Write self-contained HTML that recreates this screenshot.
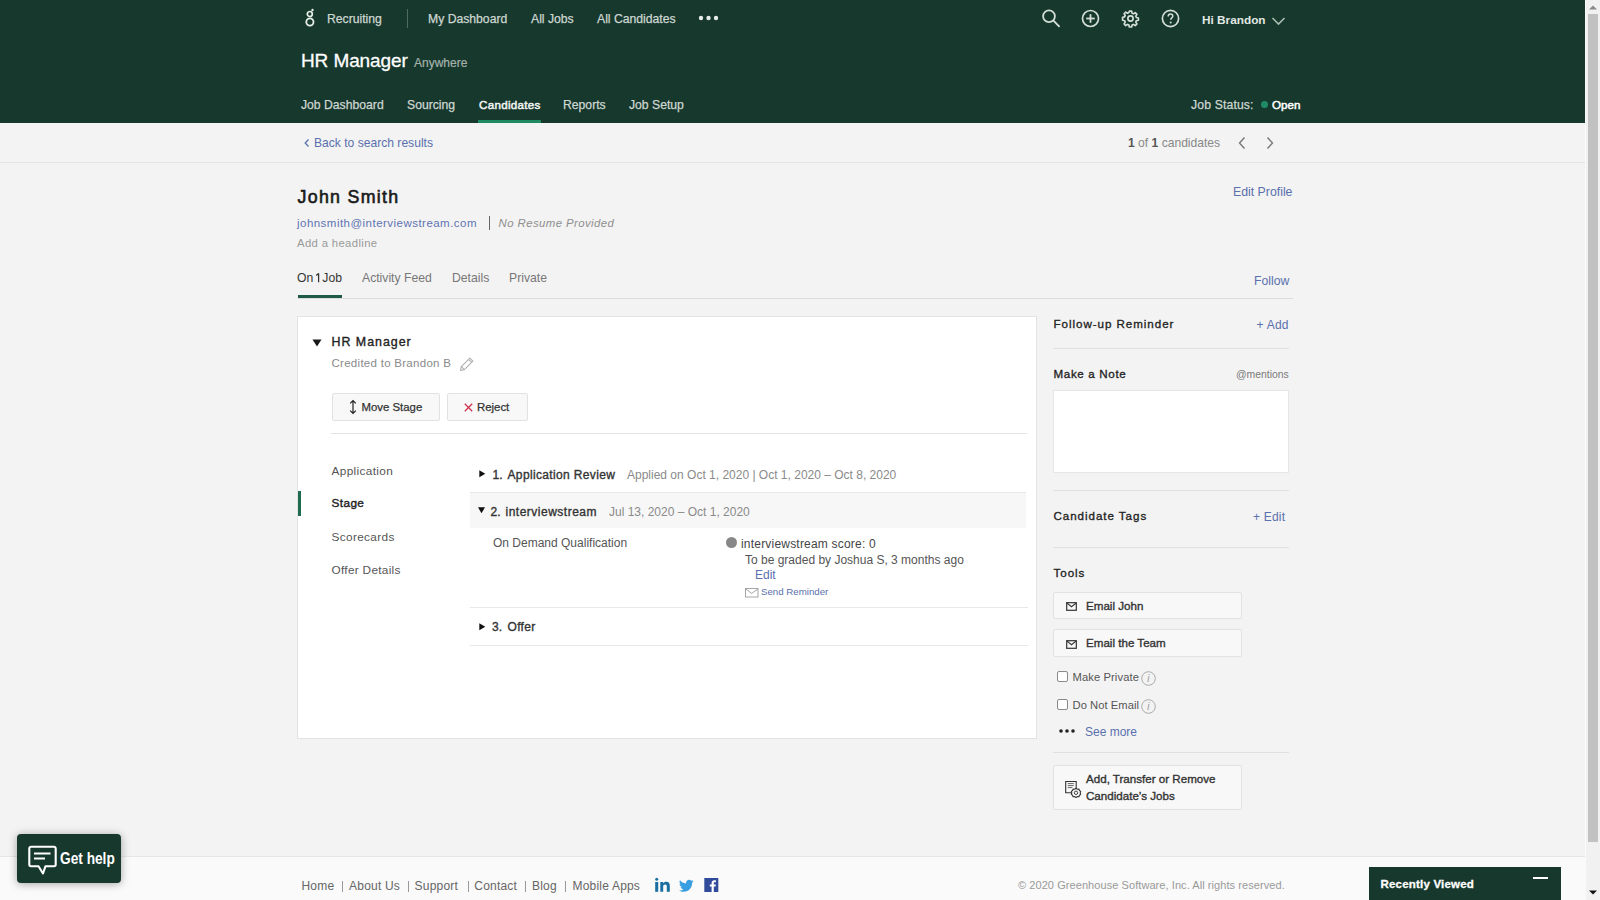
<!DOCTYPE html>
<html><head><meta charset="utf-8">
<style>
*{margin:0;padding:0;box-sizing:border-box}
html,body{width:1600px;height:900px;overflow:hidden;background:#f3f3f3;font-family:"Liberation Sans",sans-serif;font-size:12px;color:#333}
.a{position:absolute;white-space:nowrap}
#hdr{position:absolute;left:0;top:0;width:1585px;height:123px;background:#17382d}
.hn{color:#cdd7d1;font-size:12.2px;-webkit-text-stroke:0.25px #cdd7d1}
.hb{color:#f2f5f3;font-weight:bold}
.lnk{color:#5a70ad}
.g{color:#8a8a8a}
.line{position:absolute;background:#e2e2e2}
#sb{position:absolute;left:1585px;top:0;width:15px;height:900px;background:#f1f1f1}
</style></head><body>
<div id="hdr">
  <!-- logo -->
  <svg class="a" style="left:303px;top:8px" width="14" height="20" viewBox="0 0 14 20">
    <circle cx="6.8" cy="6" r="2.5" fill="none" stroke="#e6efe9" stroke-width="1.7"/>
    <circle cx="6.9" cy="14" r="3.6" fill="none" stroke="#e6efe9" stroke-width="1.8"/>
    <circle cx="9.5" cy="2" r="1.2" fill="#e6efe9"/>
  </svg>
  <div class="a hn" style="left:327px;top:12px">Recruiting</div>
  <div class="a" style="left:407px;top:9px;width:1px;height:19px;background:#4f6a5f"></div>
  <div class="a hn" style="left:428px;top:12px">My Dashboard</div>
  <div class="a hn" style="left:531px;top:12px">All Jobs</div>
  <div class="a hn" style="left:597px;top:12px">All Candidates</div>
  <svg class="a" style="left:698px;top:14px" width="22" height="8"><circle cx="3" cy="4" r="2.2" fill="#e6ece8"/><circle cx="10.5" cy="4" r="2.2" fill="#e6ece8"/><circle cx="18" cy="4" r="2.2" fill="#e6ece8"/></svg>

  <!-- right icons -->
  <svg class="a" style="left:1040px;top:8px" width="22" height="22" viewBox="0 0 22 22">
    <circle cx="9" cy="8.2" r="5.9" fill="none" stroke="#d3ded7" stroke-width="1.8"/>
    <line x1="13.2" y1="12.4" x2="19.6" y2="18.8" stroke="#d3ded7" stroke-width="1.9"/>
  </svg>
  <svg class="a" style="left:1080px;top:8px" width="22" height="22" viewBox="0 0 22 22">
    <circle cx="10.5" cy="10.5" r="8" fill="none" stroke="#d3ded7" stroke-width="1.7"/>
    <line x1="10.5" y1="6.2" x2="10.5" y2="14.8" stroke="#d3ded7" stroke-width="1.8"/>
    <line x1="6.2" y1="10.5" x2="14.8" y2="10.5" stroke="#d3ded7" stroke-width="1.8"/>
  </svg>
  <svg class="a" style="left:1120px;top:8px" width="22" height="22" viewBox="0 0 22 22">
    <g transform="translate(10.5 10.5) scale(0.88) translate(-10.5 -10.5)">
    <path d="M9.2 2.2h2.6l.5 2.3 1.6.7 2-1.3 1.9 1.9-1.3 2 .7 1.6 2.3.5v2.6l-2.3.5-.7 1.6 1.3 2-1.9 1.9-2-1.3-1.6.7-.5 2.3H9.2l-.5-2.3-1.6-.7-2 1.3-1.9-1.9 1.3-2-.7-1.6-2.3-.5V9.2l2.3-.5.7-1.6-1.3-2 1.9-1.9 2 1.3 1.6-.7z" fill="none" stroke="#d3ded7" stroke-width="1.9" stroke-linejoin="round"/>
    <circle cx="10.5" cy="10.5" r="3" fill="none" stroke="#d3ded7" stroke-width="1.9"/>
    </g>
  </svg>
  <svg class="a" style="left:1160px;top:8px" width="22" height="22" viewBox="0 0 22 22">
    <circle cx="10.5" cy="10.5" r="8.1" fill="none" stroke="#d3ded7" stroke-width="1.7"/>
    <path d="M8.2 8.4c0-1.5 1-2.3 2.3-2.3s2.3.9 2.3 2.1c0 1.6-2.1 1.7-2.1 3.5" fill="none" stroke="#d3ded7" stroke-width="1.5"/>
    <circle cx="10.7" cy="14.6" r="1" fill="#d3ded7"/>
  </svg>
  <div class="a hb" style="left:1202px;top:12.5px;font-size:11.8px;color:#e1e8e4">Hi Brandon</div>
  <svg class="a" style="left:1271px;top:16px" width="16" height="10"><path d="M1.5 2l6 6 6-6" fill="none" stroke="#a9bcb2" stroke-width="1.6"/></svg>

  <div class="a" style="left:301px;top:49.5px;font-size:19px;color:#fff;letter-spacing:-0.1px;-webkit-text-stroke:0.3px #fff">HR Manager</div>
  <div class="a" style="left:414px;top:56px;font-size:12px;color:#a3b2aa;-webkit-text-stroke:0.2px #a3b2aa">Anywhere</div>

  <div class="a hn" style="left:301px;top:97.5px">Job Dashboard</div>
  <div class="a hn" style="left:407px;top:97.5px">Sourcing</div>
  <div class="a" style="left:479px;top:97.8px;font-size:11.6px;color:#f0f4f1;-webkit-text-stroke:0.5px #f0f4f1;letter-spacing:0.3px">Candidates</div>
  <div class="a hn" style="left:563px;top:97.5px">Reports</div>
  <div class="a hn" style="left:629px;top:97.5px">Job Setup</div>
  <div class="a" style="left:478px;top:120px;width:63px;height:3px;background:#1f8a62"></div>

  <div class="a hn" style="left:1191px;top:97.5px;letter-spacing:0.15px">Job Status:</div>
  <div class="a" style="left:1261px;top:100.5px;width:7px;height:7px;border-radius:50%;background:#1f8c68"></div>
  <div class="a" style="left:1272px;top:97.8px;font-size:11.6px;color:#fff;-webkit-text-stroke:0.5px #fff">Open</div>
</div>


<!-- breadcrumb bar -->
<div class="line" style="left:0;top:162px;width:1585px;height:1px;background:#e4e4e4"></div>
<svg class="a" style="left:303px;top:138px" width="8" height="10"><path d="M5.5 1.5L2.2 5l3.3 3.5" fill="none" stroke="#5a70ad" stroke-width="1.3"/></svg>
<div class="a lnk" style="left:314px;top:136px;font-size:12.1px">Back to search results</div>
<div class="a" style="left:1128px;top:136px;font-size:12.1px;color:#888"><b style="color:#555">1</b> of <b style="color:#555">1</b> candidates</div>
<svg class="a" style="left:1237px;top:136px" width="10" height="14"><path d="M7.5 1.5L2.5 7l5 5.5" fill="none" stroke="#777" stroke-width="1.4"/></svg>
<svg class="a" style="left:1265px;top:136px" width="10" height="14"><path d="M2.5 1.5L7.5 7l-5 5.5" fill="none" stroke="#777" stroke-width="1.4"/></svg>

<!-- profile -->
<div class="a" style="left:297.5px;top:186.5px;font-size:17.8px;color:#1a1a1a;letter-spacing:1.3px;-webkit-text-stroke:0.6px #1a1a1a">John Smith</div>
<div class="a lnk" style="left:297px;top:216.5px;font-size:11.5px;letter-spacing:0.47px;color:#5f74b2">johnsmith@interviewstream.com</div>
<div class="a" style="left:489px;top:216px;width:1px;height:14px;background:#666"></div>
<div class="a" style="left:498.5px;top:216.5px;font-size:11.4px;letter-spacing:0.42px;font-style:italic;color:#8e8e8e">No Resume Provided</div>
<div class="a" style="left:297px;top:236.5px;font-size:11.3px;letter-spacing:0.36px;color:#9a9a9a">Add a headline</div>
<div class="a lnk" style="left:1233px;top:185px;font-size:12.3px">Edit Profile</div>

<!-- tabs -->
<div class="a" style="left:297px;top:271px;font-size:12.2px;color:#333">On</div><svg class="a" style="left:315px;top:273px" width="6" height="10"><path d="M3.6 0.3V9.2 M3.6 0.6L1.2 2.6" fill="none" stroke="#333" stroke-width="1.25"/></svg><div class="a" style="left:322.3px;top:271px;font-size:12.2px;color:#333">Job</div>
<div class="a" style="left:362px;top:271px;font-size:12.2px;color:#777">Activity Feed</div>
<div class="a" style="left:452px;top:271px;font-size:12.2px;color:#777">Details</div>
<div class="a" style="left:509px;top:271px;font-size:12.2px;color:#777">Private</div>
<div class="a lnk" style="left:1254px;top:273.5px;font-size:12.2px">Follow</div>
<div class="line" style="left:297px;top:298px;width:996px;height:1px;background:#dcdcdc"></div>
<div class="a" style="left:298px;top:295px;width:44px;height:2.5px;background:#1e5a45"></div>

<!-- main card -->
<div class="a" style="left:297px;top:316px;width:740px;height:423px;background:#fff;border:1px solid #e3e3e3"></div>
<svg class="a" style="left:312px;top:339px" width="10" height="8"><path d="M0.5 0.5h9l-4.5 7z" fill="#1a1a1a"/></svg>
<div class="a" style="left:331.5px;top:335px;font-size:12.4px;color:#222;letter-spacing:1.0px;-webkit-text-stroke:0.35px #222">HR Manager</div>
<div class="a" style="left:331.5px;top:356.5px;font-size:11.5px;letter-spacing:0.28px;color:#8a8a8a">Credited to Brandon B</div>
<svg class="a" style="left:458px;top:355px" width="17" height="18" viewBox="0 0 17 18"><path d="M2.5 15.5l0.8-3.8 8.6-8.6 3 3-8.6 8.6z M10.6 4.4l3 3 M3.3 11.7l3 3" fill="none" stroke="#b0b0b0" stroke-width="1.1" stroke-linejoin="round"/></svg>

<div class="a" style="left:332px;top:393px;width:108px;height:28px;background:#f8f8f8;border:1px solid #e2e2e2;border-radius:2px"></div>
<svg class="a" style="left:348px;top:399px" width="10" height="16"><path d="M5 1.5v13 M2.2 4.3l2.8-2.8 2.8 2.8 M2.2 11.7l2.8 2.8 2.8-2.8" fill="none" stroke="#222" stroke-width="1.2"/></svg>
<div class="a" style="left:361.5px;top:401px;font-size:11.4px;color:#333;-webkit-text-stroke:0.25px #333">Move Stage</div>
<div class="a" style="left:447px;top:393px;width:81px;height:28px;background:#f8f8f8;border:1px solid #e2e2e2;border-radius:2px"></div>
<svg class="a" style="left:463.5px;top:403px" width="9" height="9"><path d="M0.8 0.8l7.4 7.4 M8.2 0.8l-7.4 7.4" fill="none" stroke="#d0344f" stroke-width="1.3"/></svg>
<div class="a" style="left:477px;top:401px;font-size:11.4px;color:#333;-webkit-text-stroke:0.25px #333">Reject</div>
<div class="line" style="left:331px;top:433px;width:696px;height:1px;background:#e3e3e3"></div>

<!-- left nav -->
<div class="a" style="left:331.5px;top:463.5px;font-size:11.8px;letter-spacing:0.35px;color:#555">Application</div>
<div class="a" style="left:298px;top:491px;width:3px;height:25px;background:#1e6b50"></div>
<div class="a" style="left:331.5px;top:496px;font-size:11.8px;letter-spacing:0.4px;color:#222;-webkit-text-stroke:0.4px #222">Stage</div>
<div class="a" style="left:331.5px;top:530px;font-size:11.8px;letter-spacing:0.35px;color:#555">Scorecards</div>
<div class="a" style="left:331.5px;top:563px;font-size:11.8px;letter-spacing:0.3px;color:#555">Offer Details</div>

<!-- stages -->
<svg class="a" style="left:479px;top:470px" width="7" height="8"><path d="M0.3 0.3v7l6-3.5z" fill="#111"/></svg>
<div class="a" style="left:492.5px;top:468px;font-size:12px;color:#333;-webkit-text-stroke:0.35px #333">1.</div><div class="a" style="left:507.5px;top:468px;font-size:12px;color:#333;letter-spacing:0.35px;-webkit-text-stroke:0.35px #333">Application Review</div>
<div class="a" style="left:627px;top:468px;font-size:12px;color:#8a8a8a">Applied on Oct 1, 2020 | Oct 1, 2020 – Oct 8, 2020</div>
<div class="line" style="left:470px;top:492px;width:556px;height:1px;background:#e8e8e8"></div>
<div class="a" style="left:470px;top:493px;width:556px;height:35px;background:#f7f7f7"></div>
<svg class="a" style="left:478px;top:507px" width="7" height="7"><path d="M0 0.3h7l-3.5 6z" fill="#111"/></svg>
<div class="a" style="left:490.5px;top:504.5px;font-size:12px;color:#333;-webkit-text-stroke:0.35px #333">2.</div><div class="a" style="left:505.5px;top:504.5px;font-size:12px;color:#333;letter-spacing:0.5px;-webkit-text-stroke:0.35px #333">interviewstream</div>
<div class="a" style="left:609px;top:504.5px;font-size:12px;color:#8a8a8a">Jul 13, 2020 – Oct 1, 2020</div>
<div class="a" style="left:493px;top:536px;font-size:12px;color:#555">On Demand Qualification</div>
<div class="a" style="left:726px;top:537px;width:11px;height:11px;border-radius:50%;background:#888"></div>
<div class="a" style="left:741px;top:537px;font-size:12px;letter-spacing:0.2px;color:#444">interviewstream score: 0</div>
<div class="a" style="left:745px;top:553px;font-size:12px;color:#555">To be graded by Joshua S, 3 months ago</div>
<div class="a lnk" style="left:755px;top:568px;font-size:12px">Edit</div>
<svg class="a" style="left:745px;top:587.5px" width="14" height="10"><rect x="0.5" y="0.5" width="12.5" height="8.5" fill="none" stroke="#a5a5a5"/><path d="M0.5 0.8l6.25 4.6 6.25-4.6" fill="none" stroke="#a5a5a5"/></svg>
<div class="a lnk" style="left:761px;top:585.8px;font-size:9.7px">Send Reminder</div>
<div class="line" style="left:470px;top:607px;width:558px;height:1px;background:#e8e8e8"></div>
<svg class="a" style="left:479px;top:623px" width="7" height="8"><path d="M0.3 0.3v7l6-3.5z" fill="#111"/></svg>
<div class="a" style="left:492px;top:619.5px;font-size:12px;color:#333;-webkit-text-stroke:0.35px #333">3.</div><div class="a" style="left:507.5px;top:619.5px;font-size:12px;color:#333;letter-spacing:0.3px;-webkit-text-stroke:0.35px #333">Offer</div>
<div class="line" style="left:470px;top:645px;width:558px;height:1px;background:#e8e8e8"></div>

<!-- right sidebar -->
<div class="a" style="left:1053.5px;top:317px;font-size:11.6px;color:#222;letter-spacing:0.95px;-webkit-text-stroke:0.32px #222">Follow-up Reminder</div>
<div class="a lnk" style="left:1256.5px;top:317.5px;font-size:12px;letter-spacing:0.25px">+ Add</div>
<div class="line" style="left:1053px;top:348px;width:236px;height:1px;background:#e0e0e0"></div>
<div class="a" style="left:1053.5px;top:367px;font-size:11.6px;color:#222;letter-spacing:0.65px;-webkit-text-stroke:0.32px #222">Make a Note</div>
<div class="a" style="left:1236px;top:369px;font-size:10.4px;color:#7a7a7a">@mentions</div>
<div class="a" style="left:1053px;top:390px;width:236px;height:83px;background:#fff;border:1px solid #e6e6e6"></div>
<div class="line" style="left:1053px;top:490px;width:236px;height:1px;background:#e0e0e0"></div>
<div class="a" style="left:1053.5px;top:509px;font-size:11.6px;color:#222;letter-spacing:0.95px;-webkit-text-stroke:0.32px #222">Candidate Tags</div>
<div class="a lnk" style="left:1253px;top:509.5px;font-size:12px;letter-spacing:0.2px">+ Edit</div>
<div class="line" style="left:1053px;top:547px;width:236px;height:1px;background:#e0e0e0"></div>
<div class="a" style="left:1053.5px;top:566px;font-size:11.6px;color:#222;letter-spacing:0.95px;-webkit-text-stroke:0.32px #222">Tools</div>

<div class="a" style="left:1053px;top:592px;width:189px;height:26.5px;background:#f8f8f8;border:1px solid #e2e2e2;border-radius:2px"></div>
<svg class="a" style="left:1065.5px;top:601.5px" width="11" height="9"><rect x="0.7" y="0.7" width="9.6" height="7.6" fill="none" stroke="#333" stroke-width="1.2"/><path d="M0.7 0.9l4.8 3.8 4.8-3.8" fill="none" stroke="#333" stroke-width="1.2"/></svg>
<div class="a" style="left:1086px;top:598.5px;font-size:11.6px;color:#333;-webkit-text-stroke:0.35px #333">Email John</div>
<div class="a" style="left:1053px;top:629px;width:189px;height:28px;background:#f8f8f8;border:1px solid #e2e2e2;border-radius:2px"></div>
<svg class="a" style="left:1065.5px;top:639.5px" width="11" height="9"><rect x="0.7" y="0.7" width="9.6" height="7.6" fill="none" stroke="#333" stroke-width="1.2"/><path d="M0.7 0.9l4.8 3.8 4.8-3.8" fill="none" stroke="#333" stroke-width="1.2"/></svg>
<div class="a" style="left:1086px;top:636px;font-size:11.6px;color:#333;-webkit-text-stroke:0.35px #333">Email the Team</div>

<div class="a" style="left:1056.5px;top:670.5px;width:11px;height:11px;background:#fff;border:1px solid #8a8a8a;border-radius:2px"></div>
<div class="a" style="left:1072.5px;top:671px;font-size:11.2px;letter-spacing:0.1px;color:#555">Make Private</div>
<svg class="a" style="left:1140.8px;top:670.5px" width="16" height="16"><circle cx="7.5" cy="7.5" r="6.8" fill="none" stroke="#aaa"/><text x="7.3" y="11.3" text-anchor="middle" font-family="Liberation Sans" font-style="italic" font-size="10" fill="#999">i</text></svg>
<div class="a" style="left:1056.5px;top:698.5px;width:11px;height:11px;background:#fff;border:1px solid #8a8a8a;border-radius:2px"></div>
<div class="a" style="left:1072.5px;top:699px;font-size:11.2px;letter-spacing:0.05px;color:#555">Do Not Email</div>
<svg class="a" style="left:1140.8px;top:698.5px" width="16" height="16"><circle cx="7.5" cy="7.5" r="6.8" fill="none" stroke="#aaa"/><text x="7.3" y="11.3" text-anchor="middle" font-family="Liberation Sans" font-style="italic" font-size="10" fill="#999">i</text></svg>
<svg class="a" style="left:1058px;top:727px" width="20" height="8"><circle cx="3" cy="4" r="1.8" fill="#222"/><circle cx="9" cy="4" r="1.8" fill="#222"/><circle cx="15" cy="4" r="1.8" fill="#222"/></svg>
<div class="a lnk" style="left:1085px;top:725px;font-size:12px">See more</div>
<div class="line" style="left:1053px;top:752px;width:236px;height:1px;background:#e0e0e0"></div>
<div class="a" style="left:1053px;top:765px;width:189px;height:45px;background:#f8f8f8;border:1px solid #e2e2e2;border-radius:2px"></div>
<svg class="a" style="left:1063px;top:778px" width="22" height="22" viewBox="0 0 22 22"><path d="M8.5 14.8H2.7V3.5h10.5v7.5" fill="none" stroke="#333" stroke-width="1.1"/><path d="M4.8 5.6h6 M4.8 7.6h6 M4.8 9.6h4.5" stroke="#555" stroke-width="0.9"/><path d="M13 10.3l1.3.9 1.6-.2.5 1.5 1.3.9-.5 1.5.5 1.5-1.3.9-.5 1.5-1.6-.2-1.3.9-1.3-.9-1.6.2-.5-1.5-1.3-.9.5-1.5-.5-1.5 1.3-.9.5-1.5 1.6.2z" fill="#f8f8f8" stroke="#333" stroke-width="1.1" stroke-linejoin="round"/><circle cx="13" cy="14.8" r="1.7" fill="none" stroke="#444" stroke-width="1"/></svg>
<div class="a" style="left:1086px;top:771.2px;font-size:11.6px;color:#333;-webkit-text-stroke:0.35px #333;line-height:16.5px;white-space:normal;width:150px">Add, Transfer or Remove<br>Candidate’s Jobs</div>

<!-- footer -->
<div class="a" style="left:0;top:856px;width:1585px;height:44px;background:#fafafa;border-top:1px solid #e6e6e6"></div>
<div class="a" style="left:301.5px;top:879px;font-size:12px;letter-spacing:0.2px;color:#666">Home</div>
<div class="a" style="left:349.1px;top:879px;font-size:12px;letter-spacing:0.2px;color:#666">About Us</div>
<div class="a" style="left:414.6px;top:879px;font-size:12px;letter-spacing:0.2px;color:#666">Support</div>
<div class="a" style="left:474.3px;top:879px;font-size:12px;letter-spacing:0.2px;color:#666">Contact</div>
<div class="a" style="left:532px;top:879px;font-size:12px;letter-spacing:0.2px;color:#666">Blog</div>
<div class="a" style="left:572.5px;top:879px;font-size:12px;letter-spacing:0.2px;color:#666">Mobile Apps</div>
<div class="a" style="left:341.8px;top:881px;width:1px;height:11px;background:#999"></div>
<div class="a" style="left:407.8px;top:881px;width:1px;height:11px;background:#999"></div>
<div class="a" style="left:467.5px;top:881px;width:1px;height:11px;background:#999"></div>
<div class="a" style="left:525.2px;top:881px;width:1px;height:11px;background:#999"></div>
<div class="a" style="left:564.5px;top:881px;width:1px;height:11px;background:#999"></div>
<svg class="a" style="left:654px;top:876px" width="18" height="18" viewBox="0 0 18 18"><circle cx="2.7" cy="3.3" r="1.5" fill="#1a6fa0"/><rect x="1.2" y="6" width="3" height="9.8" fill="#1a6fa0"/><path d="M6.3 6h2.9v1.4c.5-.9 1.6-1.6 3.1-1.6 2.5 0 3.5 1.5 3.5 4.1v5.9h-3V10.5c0-1.3-.4-2.1-1.6-2.1-1.3 0-2 .9-2 2.3v5.1H6.3z" fill="#1a6fa0"/></svg>
<svg class="a" style="left:679px;top:879px" width="15" height="14" viewBox="0 0 24 20"><path d="M23.5 2.3c-.9.4-1.8.6-2.8.8 1-.6 1.8-1.6 2.1-2.7-.9.6-2 1-3.1 1.2C18.8.6 17.5 0 16.1 0c-2.7 0-4.8 2.2-4.8 4.8 0 .4 0 .8.1 1.1C7.4 5.7 3.9 3.8 1.6.9 1.2 1.6.9 2.5.9 3.4c0 1.7.9 3.2 2.2 4-.8 0-1.5-.2-2.2-.6v.1c0 2.3 1.7 4.3 3.9 4.7-.4.1-.8.2-1.3.2-.3 0-.6 0-.9-.1.6 1.9 2.4 3.3 4.5 3.4-1.7 1.3-3.7 2.1-6 2.1-.4 0-.8 0-1.2-.1 2.1 1.4 4.7 2.2 7.4 2.2 8.9 0 13.7-7.4 13.7-13.7v-.6c1-.7 1.8-1.6 2.5-2.5z" fill="#3a9fe0"/></svg>
<svg class="a" style="left:703.5px;top:878px" width="15" height="14" viewBox="0 0 15 14"><rect x="0.3" y="0" width="14" height="14" fill="#2f4b9a"/><path d="M9.8 14V8.6h1.8l.3-2.1H9.8V5.2c0-.6.2-1 1-1h1.1V2.3c-.2 0-.8-.1-1.6-.1-1.6 0-2.7 1-2.7 2.8v1.5H5.8v2.1h1.8V14z" fill="#fff"/></svg>

<div class="a" style="left:1018px;top:878.5px;font-size:11px;letter-spacing:0.07px;color:#999">© 2020 Greenhouse Software, Inc. All rights reserved.</div>
<div class="a" style="left:1369px;top:867px;width:192px;height:33px;background:#17382d"></div>
<div class="a" style="left:1380.5px;top:878px;font-size:11.5px;font-weight:bold;letter-spacing:0.2px;color:#fff;-webkit-text-stroke:0.3px #fff">Recently Viewed</div>
<div class="a" style="left:1533px;top:877px;width:15px;height:2px;background:#fff"></div>

<!-- get help -->
<div class="a" style="left:17px;top:834px;width:103.5px;height:49px;background:#17382d;border-radius:4px;box-shadow:0 1px 9px rgba(0,0,0,0.35)"></div>
<svg class="a" style="left:27px;top:844px" width="31" height="32" viewBox="0 0 31 32"><path d="M4 2.8h23a1.7 1.7 0 0 1 1.7 1.7v16a1.7 1.7 0 0 1-1.7 1.7H18.5L16 29.5 11.5 22.2H4a1.7 1.7 0 0 1-1.7-1.7v-16A1.7 1.7 0 0 1 4 2.8z" fill="none" stroke="#fff" stroke-width="2.1" stroke-linejoin="round"/><path d="M7 9.5h16.5 M7 14.5h11" stroke="#fff" stroke-width="2.1"/></svg>
<div class="a" style="left:60px;top:849.5px;font-size:15.6px;font-weight:bold;color:#fff;transform:scaleX(0.878);transform-origin:0 0">Get help</div>

<div id="sb"><div style="position:absolute;left:0;top:0;width:1px;height:900px;background:#fafafa"></div>
<div style="position:absolute;left:3px;top:14px;width:10px;height:828px;background:#c1c1c1"></div>
<svg style="position:absolute;left:4px;top:5px" width="8" height="5"><path d="M0 4.5L4 0.5 8 4.5z" fill="#8a8a8a"/></svg>
<svg style="position:absolute;left:4px;top:890px" width="8" height="5"><path d="M0 0.5L8 0.5 4 4.5z" fill="#111"/></svg>
</div>
</body></html>
